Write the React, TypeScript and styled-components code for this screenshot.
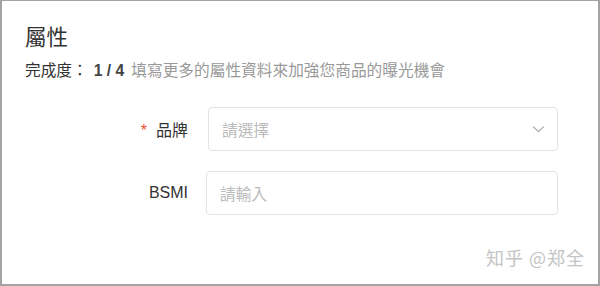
import { createGlobalStyle } from "styled-components";
import styled from "styled-components";

const GlobalStyle = createGlobalStyle`
  body {
    margin: 0;
    background: #fff;
    font-family: "Liberation Sans", "Noto Sans CJK TC", sans-serif;
  }
`;

const Frame = styled.div`
  position: relative;
  box-sizing: border-box;
  width: 600px;
  height: 286px;
  border: 2px solid #a3a3a3;
  border-top-width: 1px;
  padding: 23px 0 0 23px;
  background: #fff;
  overflow: hidden;
`;

const Title = styled.h2`
  margin: 0;
  font-size: 21.5px;
  line-height: 28px;
  font-weight: 400;
  color: #333;
`;

const Progress = styled.p`
  margin: 9px 0 0;
  font-size: 15.7px;
  line-height: 20px;
  color: #333;
  white-space: nowrap;
`;

const Count = styled.span`
  margin: 0 7px 0 6px;
  font-weight: 700;
  color: #444;
`;

const Hint = styled.span`
  color: #999;
`;

const Form = styled.div`
  display: grid;
  grid-template-columns: 163px 351px;
  column-gap: 19px;
  row-gap: 20px;
  margin-top: 26px;
  align-items: center;
`;

const Label = styled.label`
  text-align: right;
  font-size: 16px;
  color: #333;
`;

const Required = styled.span`
  color: #ee4d2d;
  margin-right: 9px;
`;

const Field = styled.div<{ $shift?: number }>`
  box-sizing: border-box;
  height: 44px;
  display: flex;
  align-items: center;
  justify-content: space-between;
  padding: 0 12px 0 13px;
  border: 1px solid #e3e3e3;
  border-radius: 4px;
  margin-left: ${(p) => p.$shift ?? 0}px;
  font-size: 15.7px;
  color: #bbb;
`;

const Watermark = styled.div`
  position: absolute;
  right: 13px;
  bottom: 14px;
  font-family: "Noto Sans CJK SC", sans-serif;
  font-size: 18px;
  color: #c4c4c4;
  letter-spacing: 1px;
  text-shadow: 0 0 1px #fff;
`;

const Chevron = () => (
  <svg width="13" height="8" viewBox="0 0 13 8" fill="none">
    <path d="M1 1.5 L6.5 6.5 L12 1.5" stroke="#b5b5b5" strokeWidth="1.3" />
  </svg>
);

export default function App() {
  return (
    <>
      <GlobalStyle />
      <Frame>
        <Title>屬性</Title>
        <Progress>
          完成度：<Count>1 / 4</Count>
          <Hint>填寫更多的屬性資料來加強您商品的曝光機會</Hint>
        </Progress>
        <Form>
          <Label>
            <Required>*</Required>品牌
          </Label>
          <Field $shift={1}>
            請選擇
            <Chevron />
          </Field>
          <Label>BSMI</Label>
          <Field $shift={-1}>請輸入</Field>
        </Form>
        <Watermark>知乎 @郑全</Watermark>
      </Frame>
    </>
  );
}
